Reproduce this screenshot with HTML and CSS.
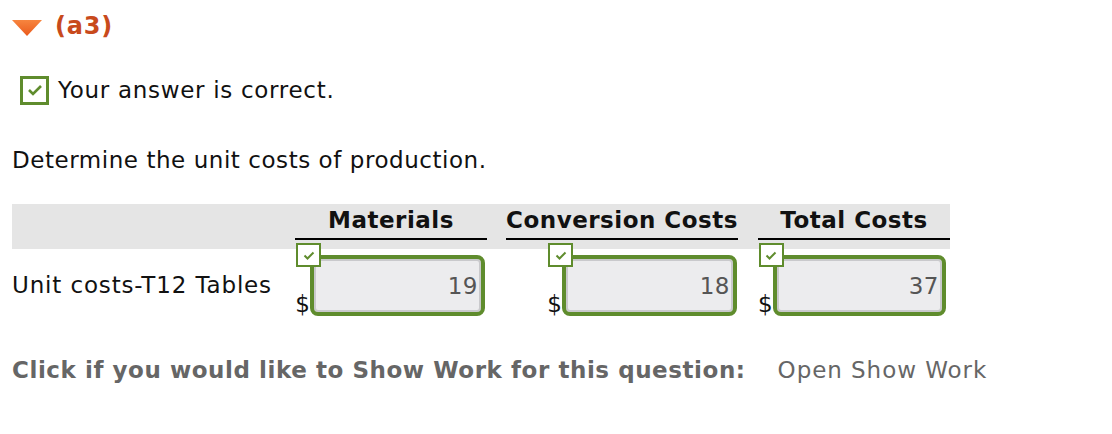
FILE: index.html
```html
<!DOCTYPE html>
<html>
<head>
<meta charset="utf-8">
<link rel="stylesheet" href="styles.css">
</head>
<body>
<div class="page">
  <div class="part-title">
    <svg class="tri" width="30" height="16" viewBox="0 0 30 16"><defs><linearGradient id="g" x1="0" y1="0" x2="0" y2="1"><stop offset="0" stop-color="#f7853f"/><stop offset="1" stop-color="#ea5a1c"/></linearGradient></defs><polygon points="0,0 30,0 15,16" fill="url(#g)"/></svg>
    <span class="part-label">(a3)</span>
  </div>
  <div class="correct">
    <span class="bigcheck"><svg width="16" height="12" viewBox="0 0 16 12"><polyline points="2,6 6,10 14,2" fill="none" stroke="#5f8c2d" stroke-width="2.6"/></svg></span>
    <span>Your answer is correct.</span>
  </div>
  <p class="question">Determine the unit costs of production.</p>
  <div class="table">
    <div class="hdr">
      <div class="hcell c1"><span>Materials</span></div>
      <div class="hcell c2"><span>Conversion Costs</span></div>
      <div class="hcell c3"><span>Total Costs</span></div>
    </div>
    <div class="row">
      <div class="label">Unit costs-T12 Tables</div>
      <div class="cell c1"><span class="dollar">$</span><div class="inp"><span class="smallcheck"><svg width="12" height="9" viewBox="0 0 12 9"><polyline points="1.5,4.5 4.5,7.5 10.5,1.5" fill="none" stroke="#5f8c2d" stroke-width="2"/></svg></span><span class="val">19</span></div></div>
      <div class="cell c2"><span class="dollar">$</span><div class="inp"><span class="smallcheck"><svg width="12" height="9" viewBox="0 0 12 9"><polyline points="1.5,4.5 4.5,7.5 10.5,1.5" fill="none" stroke="#5f8c2d" stroke-width="2"/></svg></span><span class="val">18</span></div></div>
      <div class="cell c3"><span class="dollar">$</span><div class="inp"><span class="smallcheck"><svg width="12" height="9" viewBox="0 0 12 9"><polyline points="1.5,4.5 4.5,7.5 10.5,1.5" fill="none" stroke="#5f8c2d" stroke-width="2"/></svg></span><span class="val">37</span></div></div>
    </div>
  </div>
  <div class="showwork">
    <span class="sw-label">Click if you would like to Show Work for this question:</span>
    <span class="sw-link">Open Show Work</span>
  </div>
</div>
</body>
</html>
```
FILE: styles.css
```css
html, body {
  margin: 0;
  padding: 0;
  background: #ffffff;
}
body {
  font-family: "DejaVu Sans", Verdana, sans-serif;
  font-size: 23px;
  letter-spacing: 0.6px;
  color: #111;
}
.page {
  padding: 12px 0 0 12px;
}
.part-title {
  display: flex;
  align-items: center;
  height: 28px;
}
.tri {
  display: block;
  margin-top: 4px;
}
.part-label {
  margin-left: 13px;
  font-weight: bold;
  color: #c84a1c;
  font-size: 24px;
  letter-spacing: 0.8px;
  line-height: 28px;
}
.correct {
  display: flex;
  align-items: center;
  margin-top: 36px;
  margin-left: 8px;
  height: 28px;
  line-height: 28px;
  letter-spacing: 0.7px;
}
.bigcheck {
  box-sizing: border-box;
  width: 29px;
  height: 29px;
  border: 3px solid #5f8c2d;
  background: #fff;
  display: flex;
  align-items: center;
  justify-content: center;
  margin-right: 9px;
}
.question {
  margin: 42px 0 0 0;
  line-height: 28px;
  letter-spacing: 0.55px;
}
.table {
  margin-top: 30px;
  width: 938px;
}
.hdr {
  display: grid;
  grid-template-columns: 283px 192px 19px 232px 20px 192px;
  background: #e5e5e5;
  height: 45px;
}
.hcell {
  display: flex;
  align-items: flex-end;
  justify-content: center;
  font-weight: bold;
  height: 34px;
  border-bottom: 2px solid #000;
  line-height: 28px;
  white-space: nowrap;
  letter-spacing: 0.5px;
}
.hcell.c1 { grid-column: 2; }
.hcell.c2 { grid-column: 4; }
.hcell.c3 { grid-column: 6; }
.hcell span {
  padding-bottom: 4px;
}
.row {
  display: grid;
  grid-template-columns: 283px 192px 19px 232px 20px 192px;
  align-items: start;
}
.label {
  grid-column: 1;
  padding-top: 22px;
  line-height: 28px;
  white-space: nowrap;
  letter-spacing: 0.85px;
}
.cell {
  display: flex;
  justify-content: flex-end;
  align-items: flex-end;
  padding-top: 6px;
}
.cell.c1 { grid-column: 2; padding-right: 2px; }
.cell.c2 { grid-column: 4; padding-right: 1px; }
.cell.c3 { grid-column: 6; padding-right: 4px; }
.dollar {
  line-height: 24px;
  margin-right: 0;
  letter-spacing: 0;
}
.inp {
  position: relative;
  box-sizing: border-box;
  width: 175px;
  height: 61px;
  border: 4px solid #5f8c2d;
  border-radius: 8px;
  background: #ececee;
  box-shadow: inset 0 0 0 2px #c9c9cc;
  display: flex;
  align-items: center;
  justify-content: flex-end;
  padding-right: 3px;
}
.val {
  color: #555;
  letter-spacing: 0.5px;
}
.smallcheck {
  position: absolute;
  left: -18px;
  top: -16px;
  box-sizing: border-box;
  width: 25px;
  height: 24px;
  border: 2px solid #5f8c2d;
  background: #fff;
  display: flex;
  align-items: center;
  justify-content: center;
}
.showwork {
  margin-top: 40px;
  display: flex;
  align-items: baseline;
  color: #666;
  line-height: 28px;
  white-space: nowrap;
}
.sw-label {
  font-weight: bold;
  letter-spacing: 0.56px;
}
.sw-link {
  margin-left: 32px;
  letter-spacing: 0.95px;
}
```
